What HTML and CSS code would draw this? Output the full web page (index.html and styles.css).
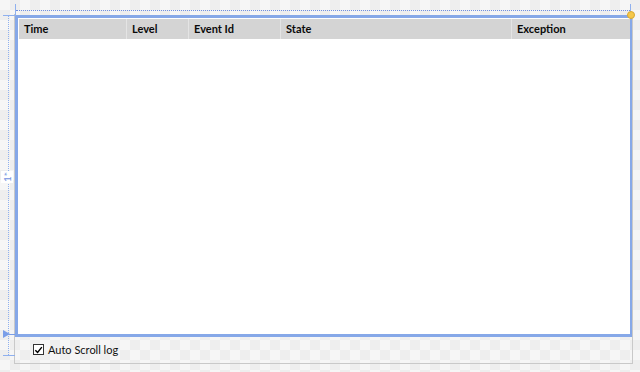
FILE: index.html
```html
<!DOCTYPE html>
<html lang="en">
<head>
	<meta charset="UTF-8">
	<title>Log View</title>
	<link rel="stylesheet" href="styles.css">
</head>
<body>
	<div class="surface">
		<!-- designer adorners -->
		<div class="guide-top"></div>
		<div class="tick tick-top-left"></div>
		<div class="tick tick-top-right"></div>
		<div class="guide-left"></div>
		<div class="tick tick-left-top"></div>
		<div class="tick tick-left-bottom"></div>
		<div class="row-label">1*</div>
		<div class="row-marker"></div>
		<div class="row-marker-line"></div>
		<div class="corner-handle"></div>

		<div class="control">
			<div class="grid">
				<div class="grid-header">
					<div class="col col-time">Time</div>
					<div class="col col-level">Level</div>
					<div class="col col-event">Event Id</div>
					<div class="col col-state">State</div>
					<div class="col col-exception">Exception</div>
				</div>
			</div>
			<label class="autoscroll">
				<span class="check">
					<svg width="10" height="10" viewBox="0 0 10 10"><path d="M1.5 5.2 L4 7.8 L8.7 1.8" fill="none" stroke="#000" stroke-width="1.6"/></svg>
				</span>
				Auto Scroll log
			</label>
		</div>
	</div>
</body>
</html>
```
FILE: styles.css
```css
body {
	margin: 0;
	font-family: Lato, "Open Sans", sans-serif;
}
.surface {
	position: relative;
	width: 640px;
	height: 372px;
	overflow: hidden;
	background-color: #f6f6f6;
	background-image: conic-gradient(#eeeeee 25%, transparent 25% 50%, #eeeeee 50% 75%, transparent 75%);
	background-size: 20px 20px;
	padding: 14px 0 0 14px;
	box-sizing: border-box;
}
.control {
	width: 619px;
	height: 350px;
	border-right: 1px solid #c9c9c9;
	border-bottom: 1px solid #c9c9c9;
	border-left: 1px solid #c9c9c9;
	box-sizing: border-box;
	display: flex;
	flex-direction: column;
}
.grid {
	margin-top: 1px;
	height: 322px;
	border: 3px solid #86a8e8;
	border-right-width: 2px;
	background: white;
	box-sizing: border-box;
	padding: 1px 0 0 1px;
}
.grid-header {
	display: flex;
	height: 20px;
	background: #d4d4d4;
	font-size: 11px;
	font-weight: bold;
	color: #0a0a0a;
}
.col {
	padding-left: 5px;
	line-height: 20px;
	border-right: 1px solid #e4e4e4;
	box-sizing: border-box;
}
.col-time { width: 108px; }
.col-level { width: 62px; }
.col-event { width: 92px; }
.col-state { width: 231px; }
.col-exception { flex: 1; border-right: none; }
.autoscroll {
	display: flex;
	align-items: center;
	gap: 4px;
	margin: 6px 0 0 18px;
	font-size: 11px;
	color: #111;
}
.check {
	width: 11px;
	height: 11px;
	border: 1px solid #333;
	background: white;
	display: flex;
	align-items: center;
	justify-content: center;
	box-sizing: border-box;
}

/* adorners */
.guide-top {
	position: absolute;
	left: 16px;
	top: 10px;
	width: 614px;
	border-top: 1px dotted #6f8fe0;
}
.tick {
	position: absolute;
	background: #8fb0ee;
}
.tick-top-left { left: 15px; top: 4px; width: 1px; height: 12px; }
.tick-top-right { left: 630px; top: 4px; width: 1px; height: 10px; }
.tick-left-top { left: 3px; top: 15px; width: 12px; height: 1px; }
.tick-left-bottom { left: 3px; top: 355px; width: 12px; height: 1px; }
.guide-left {
	position: absolute;
	left: 8px;
	top: 16px;
	height: 339px;
	border-left: 1px dotted #8fb0ee;
}
.row-label {
	position: absolute;
	left: 1px;
	top: 171px;
	width: 12px;
	height: 12px;
	background: white;
	color: #6f8fe0;
	font-size: 10px;
	line-height: 12px;
	text-align: center;
	transform: rotate(-90deg);
}
.row-marker {
	position: absolute;
	left: 3px;
	top: 330px;
	width: 0;
	height: 0;
	border-top: 4px solid transparent;
	border-bottom: 4px solid transparent;
	border-left: 7px solid #7a9ee8;
}
.row-marker-line {
	position: absolute;
	left: 9px;
	top: 334px;
	width: 6px;
	height: 1px;
	background: #7a9ee8;
}
.corner-handle {
	position: absolute;
	left: 627px;
	top: 11px;
	width: 6px;
	height: 6px;
	border-radius: 50%;
	background: #f5c84a;
	border: 1px solid #d8a830;
}
```
